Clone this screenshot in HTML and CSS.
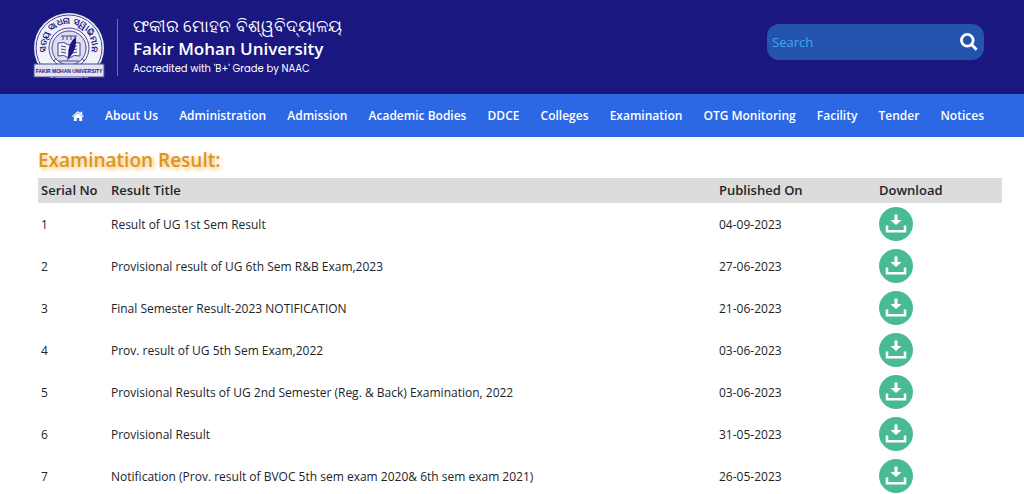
FILE: index.html
```html
<!DOCTYPE html>
<html lang="en">
<head>
    <meta charset="UTF-8">
    <meta name="viewport" content="width=device-width, initial-scale=1.0">
    <title>Fakir Mohan University - Examination Result</title>
    <link rel="stylesheet" href="styles.css">
</head>
<body>

    <!-- shared download icon -->
    <svg class="sprite" aria-hidden="true">
        <symbol id="download" viewBox="0 0 34 34">
            <circle cx="17" cy="17" r="17" fill="#49bb93"/>
            <path d="M15.500 7.500h3v5.500h4l-5.500 5-5.500-5h4z" fill="#fff"/>
            <path d="M8 18.500v5.700h18v-5.700" fill="none" stroke="#fff" stroke-width="2.500"/>
        </symbol>
    </svg>

    <header class="header">
        <div class="brand">
            <svg class="seal" viewBox="0 0 72 66" role="img" aria-label="University seal">
                <defs>
                    <path id="motto" d="M18 49A23 23 0 1 1 54 49"/>
                </defs>
                <circle cx="36" cy="36" r="35" fill="#f1f1fa"/>
                <circle cx="36" cy="36" r="33" fill="none" stroke="#4a4792" stroke-width="1"/>
                <circle cx="36" cy="36" r="20" fill="none" stroke="#4a4792" stroke-width="1"/>
                <circle cx="36" cy="36" r="17" fill="#dedeee" stroke="#4a4792" stroke-width="1"/>
                <g fill="none" stroke="#4a4792" stroke-width="1">
                    <path d="M25 31q6-2 11 2q5-4 11-2v13q-6-2-11 2q-5-4-11-2z" fill="#f1f1fa"/>
                    <path d="M28 34l5 1M28 37l5 1M28 40l5 1M39 35l5-1M39 38l5-1M39 41l5-1M23 46l-2 3M49 46l2 3M26 49h20"/>
                    <path d="M28 24h16M30 24v4M34 24v4M38 24v4M42 24v4"/>
                </g>
                <path d="M43 25q-8 5-8 20l-1 4l3-4q7-8 6-20z" fill="#1b1780"/>
                <text class="seal-motto"><textPath href="#motto" startOffset="50%" text-anchor="middle">ସତ୍ୟ ସାଧନା ସ୍ୱାଭିମାନ</textPath></text>
                <rect x="1" y="52" width="70" height="13" fill="#e3e3f2" stroke="#4a4792" stroke-width="1"/>
                <text class="seal-name" x="36" y="61" text-anchor="middle">FAKIR MOHAN UNIVERSITY</text>
            </svg>
            <div class="brand-text">
                <div class="brand-odia" lang="or">ଫକୀର ମୋହନ ବିଶ୍ୱବିଦ୍ୟାଳୟ</div>
                <div class="brand-name">Fakir Mohan University</div>
                <div class="brand-note">Accredited with 'B+' Grade by NAAC</div>
            </div>
        </div>
        <form class="search">
            <input type="text" placeholder="Search" aria-label="Search">
            <button type="submit" aria-label="Submit search">
                <svg viewBox="0 0 16 16"><circle cx="6.500" cy="6.500" r="5.200"/><path d="M10.500 10.500l4.300 4.300"/></svg>
            </button>
        </form>
    </header>

    <nav class="nav">
        <a href="#" aria-label="Home">
            <svg class="home" viewBox="0 0 12 10"><path d="M6 0L8.500 2.200V.8h1.700v2.900L12 5.300l-.7.800L6 1.500.7 6.100 0 5.300z"/><path d="M6 2l4.200 3.600V10H7.200V7H4.800v3H1.800V5.600z"/></svg>
        </a>
        <a href="#">About Us</a>
        <a href="#">Administration</a>
        <a href="#">Admission</a>
        <a href="#">Academic Bodies</a>
        <a href="#">DDCE</a>
        <a href="#">Colleges</a>
        <a href="#">Examination</a>
        <a href="#">OTG Monitoring</a>
        <a href="#">Facility</a>
        <a href="#">Tender</a>
        <a href="#">Notices</a>
    </nav>

    <main class="content">
        <h1>Examination Result:</h1>
        <table class="results">
            <thead>
                <tr>
                    <th class="col-serial">Serial No</th>
                    <th>Result Title</th>
                    <th class="col-date">Published On</th>
                    <th class="col-download">Download</th>
                </tr>
            </thead>
            <tbody>
                <tr>
                    <td>1</td>
                    <td>Result of UG 1st Sem Result</td>
                    <td>04-09-2023</td>
                    <td><a href="#" aria-label="Download"><svg class="icon"><use href="#download"/></svg></a></td>
                </tr>
                <tr>
                    <td>2</td>
                    <td>Provisional result of UG 6th Sem R&amp;B Exam,2023</td>
                    <td>27-06-2023</td>
                    <td><a href="#" aria-label="Download"><svg class="icon"><use href="#download"/></svg></a></td>
                </tr>
                <tr>
                    <td>3</td>
                    <td>Final Semester Result-2023 NOTIFICATION</td>
                    <td>21-06-2023</td>
                    <td><a href="#" aria-label="Download"><svg class="icon"><use href="#download"/></svg></a></td>
                </tr>
                <tr>
                    <td>4</td>
                    <td>Prov. result of UG 5th Sem Exam,2022</td>
                    <td>03-06-2023</td>
                    <td><a href="#" aria-label="Download"><svg class="icon"><use href="#download"/></svg></a></td>
                </tr>
                <tr>
                    <td>5</td>
                    <td>Provisional Results of UG 2nd Semester (Reg. &amp; Back) Examination, 2022</td>
                    <td>03-06-2023</td>
                    <td><a href="#" aria-label="Download"><svg class="icon"><use href="#download"/></svg></a></td>
                </tr>
                <tr>
                    <td>6</td>
                    <td>Provisional Result</td>
                    <td>31-05-2023</td>
                    <td><a href="#" aria-label="Download"><svg class="icon"><use href="#download"/></svg></a></td>
                </tr>
                <tr>
                    <td>7</td>
                    <td>Notification (Prov. result of BVOC 5th sem exam 2020&amp; 6th sem exam 2021)</td>
                    <td>26-05-2023</td>
                    <td><a href="#" aria-label="Download"><svg class="icon"><use href="#download"/></svg></a></td>
                </tr>
            </tbody>
        </table>
    </main>

</body>
</html>
```
FILE: styles.css
```css
* {
    box-sizing: border-box;
}
body {
    margin: 0;
    font-family: "Segoe UI", "Open Sans", "Noto Sans", sans-serif;
    font-size: 13px;
    color: #212529;
    background-color: #fff;
}
.sprite {
    display: none;
}
.header {
    display: flex;
    justify-content: space-between;
    align-items: flex-start;
    min-height: 94px;
    padding: 12px 40px 10px 33px;
    background-color: #1b1780;
}
.brand {
    display: flex;
    color: #fff;
}
.seal {
    width: 72px;
    height: 66px;
}
.seal-motto {
    font-size: 9px;
    font-weight: bold;
    fill: #1b1780;
}
.seal-name {
    font-family: "Liberation Sans Narrow", "Liberation Sans", Arial, sans-serif;
    font-size: 5px;
    font-weight: bold;
    fill: #1b1780;
}
.brand-text {
    height: 57px;
    margin: 7px 0 0 12px;
    padding-left: 15px;
    border-left: 1px solid #6f6cb8;
    white-space: nowrap;
}
.brand-odia {
    margin-top: -6px;
    font-size: 17px;
    line-height: 25px;
}
.brand-name {
    font-size: 17px;
    font-weight: 600;
    line-height: 22px;
}
.brand-note {
    font-family: Poppins, Inter, sans-serif;
    font-size: 10px;
    line-height: 18px;
}
.search {
    display: flex;
    align-items: center;
    width: 217px;
    height: 36px;
    margin-top: 12px;
    padding: 0 6px 0 5px;
    border-radius: 12px;
    background-color: #2453ae;
}
.search input {
    flex: 1;
    min-width: 0;
    padding: 0;
    border: none;
    outline: none;
    background: none;
    font: inherit;
    color: #fff;
}
.search input::placeholder {
    color: #3fa4f0;
    opacity: 1;
}
.search button {
    display: flex;
    padding: 0;
    border: none;
    background: none;
    cursor: pointer;
}
.search svg {
    width: 18px;
    height: 18px;
    fill: none;
    stroke: #fff;
    stroke-width: 2.500;
}
.nav {
    display: flex;
    justify-content: space-between;
    align-items: center;
    min-height: 43px;
    padding: 0 40px 0 72px;
    background-color: #2c68e4;
}
.nav a {
    color: #fff;
    font-size: 12px;
    font-weight: 600;
    text-decoration: none;
    white-space: nowrap;
}
.home {
    display: block;
    width: 12px;
    height: 10px;
    fill: #fff;
}
.content {
    padding: 9px 22px 0 38px;
}
h1 {
    margin: 0 0 4px;
    font-size: 19px;
    font-weight: 600;
    line-height: 28px;
    color: #dd9522;
    text-shadow: 2px 2px 4px #f5b95a;
}
.results {
    width: 100%;
    table-layout: fixed;
    border-collapse: collapse;
}
.results th {
    padding: 3px;
    background-color: #dcdcdc;
    font-weight: 600;
    line-height: 19px;
    text-align: left;
}
.results td {
    height: 42px;
    padding: 0 3px;
    font-size: 12px;
}
.col-serial {
    width: 70px;
}
.col-date {
    width: 160px;
}
.col-download {
    width: 126px;
}
.icon {
    display: block;
    width: 34px;
    height: 34px;
}
```
